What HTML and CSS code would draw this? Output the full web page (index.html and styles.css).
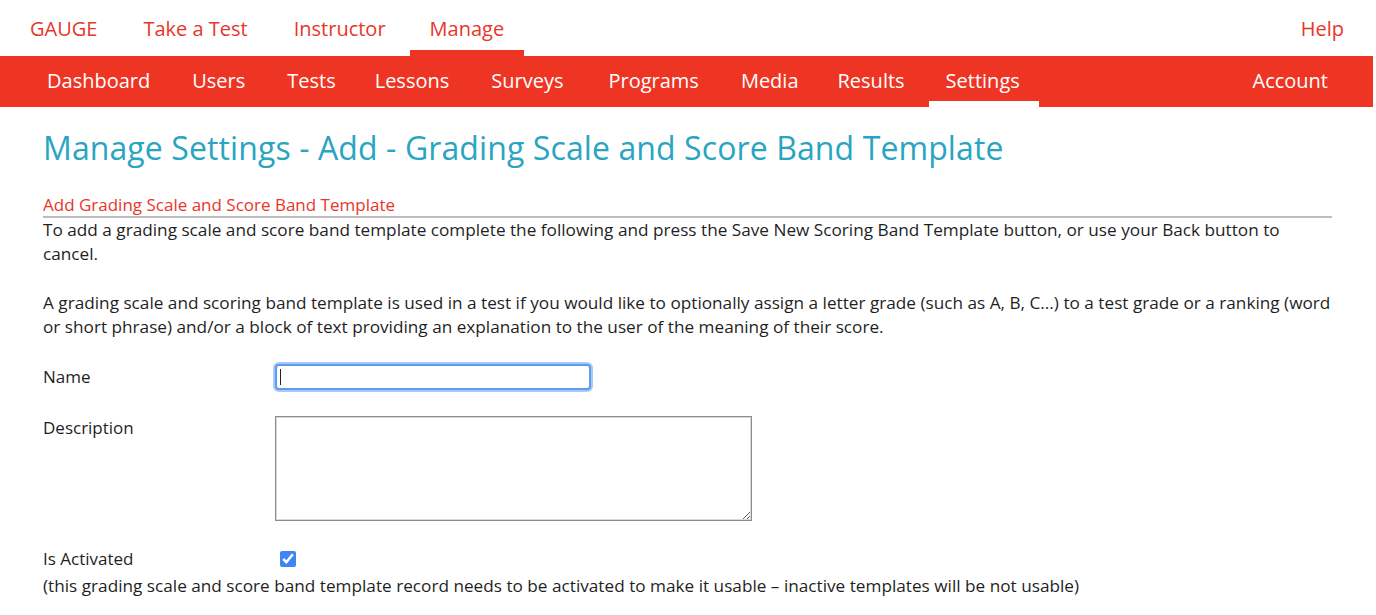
FILE: index.html
```html
<!DOCTYPE html>
<html lang="en">
<head>
<meta charset="utf-8">
<title>Manage Settings - Add - Grading Scale and Score Band Template</title>
<link rel="stylesheet" href="styles.css">
</head>
<body>
<header class="top">
  <nav class="topnav">
    <a class="topnav-item brand">GAUGE</a>
    <a class="topnav-item">Take a Test</a>
    <a class="topnav-item">Instructor</a>
    <a class="topnav-item active">Manage</a>
    <a class="topnav-item help">Help</a>
  </nav>
  <nav class="subnav">
    <a class="subnav-item">Dashboard</a>
    <a class="subnav-item">Users</a>
    <a class="subnav-item tight">Tests</a>
    <a class="subnav-item">Lessons</a>
    <a class="subnav-item wide">Surveys</a>
    <a class="subnav-item">Programs</a>
    <a class="subnav-item tight">Media</a>
    <a class="subnav-item">Results</a>
    <a class="subnav-item active">Settings</a>
    <a class="subnav-item account">Account</a>
  </nav>
</header>
<main class="content">
  <h1 class="page-title">Manage Settings - Add - Grading Scale and Score Band Template</h1>
  <h2 class="section-title">Add Grading Scale and Score Band Template</h2>
  <p class="text">To add a grading scale and score band template complete the following and press the Save New Scoring Band Template button, or use your Back button to cancel.</p>
  <p class="text">A grading scale and scoring band template is used in a test if you would like to optionally assign a letter grade (such as A, B, C...) to a test grade or a ranking (word or short phrase) and/or a block of text providing an explanation to the user of the meaning of their score.</p>
  <form class="form">
    <div class="row row-name">
      <label class="label">Name</label>
      <span class="field-wrap"><input class="input" type="text"><span class="caret"></span></span>
    </div>
    <div class="row row-desc">
      <label class="label">Description</label>
      <textarea class="textarea"></textarea>
    </div>
    <div class="row row-active">
      <label class="label">Is Activated</label>
      <input class="check" type="checkbox" checked>
    </div>
    <p class="note">(this grading scale and score band template record needs to be activated to make it usable – inactive templates will be not usable)</p>
  </form>
</main>
</body>
</html>
```
FILE: styles.css
```css
html, body {
  margin: 0;
  padding: 0;
  background: #fff;
}
body {
  font-family: "Open Sans", "Liberation Sans", Arial, sans-serif;
  color: #1f1f1f;
  width: 1373px;
}
.topnav {
  display: flex;
  height: 56px;
  padding: 0 9px 0 10px;
}
.topnav-item {
  display: flex;
  align-items: center;
  padding: 0 20px;
  margin-right: 6px;
  font-size: 20px;
  color: #e8362a;
}
.topnav-item.active {
  margin-left: -2px;
  box-shadow: inset 0 -6px 0 #ee3524;
}
.topnav-item.help {
  margin-left: auto;
  margin-right: 0;
}
.subnav {
  display: flex;
  height: 51px;
  background: #ee3524;
  padding: 0 25px 0 29px;
}
.subnav-item {
  display: flex;
  align-items: center;
  padding: 0 18px 3px;
  margin-right: 6px;
  font-size: 20px;
  color: #fff;
}
.subnav-item.tight {
  margin-right: 3px;
}
.subnav-item.wide {
  margin-right: 9px;
}
.subnav-item.active {
  padding: 0 19px 3px 17px;
  box-shadow: inset 0 -6px 0 #fff;
}
.subnav-item.account {
  margin-left: auto;
  margin-right: 0;
  padding: 0 20px 3px;
}
.content {
  padding: 0 41px 0 43px;
}
.page-title {
  margin: 21px 0 0;
  font-size: 32px;
  font-weight: 400;
  line-height: 40px;
  color: #29a5c1;
  letter-spacing: 0.1px;
}
.section-title {
  margin: 26px 0 0;
  padding: 0;
  font-size: 17px;
  font-weight: 400;
  line-height: 22px;
  color: #e8362a;
  border-bottom: 2px solid #bdbdbd;
}
.text {
  margin: 0 0 25px;
  font-size: 17.2px;
  line-height: 24px;
}
.form {
  margin-top: 0;
}
.row {
  display: grid;
  grid-template-columns: 232px auto;
  justify-content: start;
  font-size: 17px;
}
.label {
  line-height: 24px;
}
.row-name {
  align-items: center;
}
.row-desc {
  margin-top: 26px;
  align-items: start;
}
.row-active {
  margin-top: 26px;
  align-items: center;
}
.field-wrap {
  position: relative;
  display: inline-block;
  width: 316px;
  height: 26px;
}
.input {
  box-sizing: border-box;
  width: 316px;
  height: 26px;
  margin: 0;
  border: 2px solid #5e9bec;
  border-radius: 4px;
  box-shadow: 0 0 0 2px #a9c9f7;
  outline: none;
  font-family: inherit;
  font-size: 15px;
  padding: 0 4px;
  background: #fff;
}
.caret {
  position: absolute;
  left: 5px;
  top: 5px;
  width: 1px;
  height: 16px;
  background: #222;
}
.textarea {
  box-sizing: border-box;
  width: 477px;
  height: 105px;
  margin: 0;
  border: 1px solid #8c8c8c;
  box-shadow: inset 0 0 0 1px #d9d9d9;
  font-family: inherit;
  font-size: 15px;
}
.check {
  width: 16px;
  height: 16px;
  margin: 0 0 0 5px;
  accent-color: #3d86f4;
}
.note {
  margin: 3px 0 0;
  font-size: 17.2px;
  line-height: 24px;
}
```
